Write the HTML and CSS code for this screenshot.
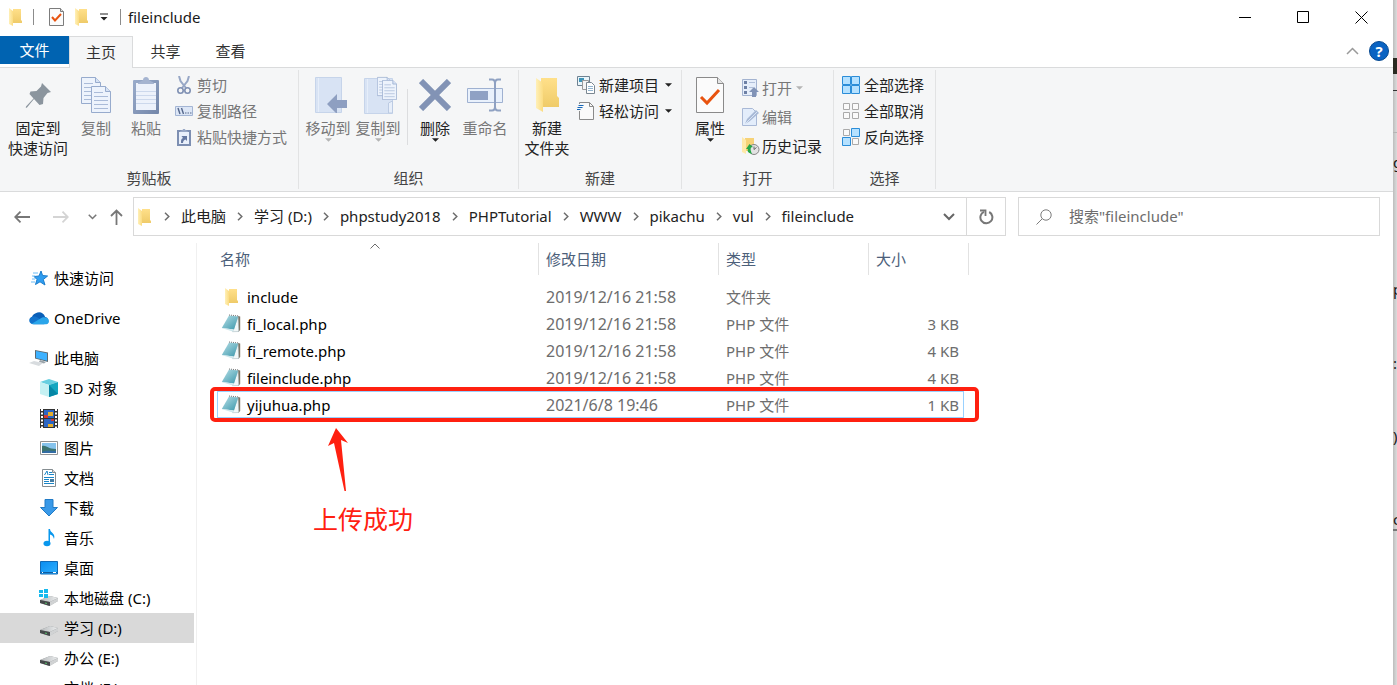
FILE: index.html
```html
<!DOCTYPE html>
<html lang="zh-CN">
<head>
<meta charset="utf-8">
<title>fileinclude</title>
<link rel="stylesheet" href="styles.css">
</head>
<body>
<svg class="defs" aria-hidden="true">
  <defs>
    <linearGradient id="gFold" x1="0" x2="1"><stop offset="0" stop-color="#fff0b8"/><stop offset="1" stop-color="#fbdc82"/></linearGradient>
    <linearGradient id="gFoldB" x1="0" x2="0" y1="0" y2="1"><stop offset="0" stop-color="#ffe08a"/><stop offset="1" stop-color="#efcb69"/></linearGradient>
    <linearGradient id="gNote" x1="0" y1="0" x2="1" y2="1"><stop offset="0" stop-color="#b9e0e8"/><stop offset="1" stop-color="#3a97ab"/></linearGradient>
    <linearGradient id="gClip" x1="0" y1="0" x2="1" y2="1"><stop offset="0" stop-color="#9aaccb"/><stop offset="1" stop-color="#7386a9"/></linearGradient>
    <linearGradient id="gDrive" x1="0" x2="1"><stop offset="0" stop-color="#b5b8ba"/><stop offset="1" stop-color="#eceeef"/></linearGradient>
    <linearGradient id="gDesk" x1="0" y1="0" x2="1" y2="1"><stop offset="0" stop-color="#0a8df0"/><stop offset="1" stop-color="#2fb0ff"/></linearGradient>
    <symbol id="folder" viewBox="0 0 13 18"><path d="M4 1h8v11l1 1v2H4z" fill="url(#gFoldB)"/><path d="M0 0l4 3v15l-4-2z" fill="url(#gFold)"/></symbol>
    <symbol id="folderBig" viewBox="0 0 25 36"><path d="M6 1h16v18l2 2v9H6z" fill="url(#gFoldB)"/><path d="M1 1l7 5v29l-7-4z" fill="url(#gFold)"/></symbol>
    <symbol id="props" viewBox="0 0 28 36"><path d="M.5.5h21l6 6v29H.5z" fill="#fbfbfb" stroke="#8a8a8a"/><path d="M21.500.5v6h6" fill="#e4e4e4" stroke="#8a8a8a"/><path d="M5 20l6 6L23 13" fill="none" stroke="#e8530f" stroke-width="3"/></symbol>
    <symbol id="propsSmall" viewBox="0 0 15 18"><path d="M.5.5h11l3 3v14H.5z" fill="#fbfbfb" stroke="#7c7c7c"/><path d="M11.500.5v3h3" fill="#ddd" stroke="#7c7c7c"/><path d="M3 9l3 3.500L12 6" fill="none" stroke="#e8530f" stroke-width="2"/></symbol>
    <symbol id="page" viewBox="0 0 20 27"><path d="M.5.500h14l5 5v21H.5z" fill="#edf3fc" stroke="#97abcd"/><path d="M14.500.5v5h5" fill="#d6e2f4" stroke="#97abcd"/><path d="M3 6.500h9M3 10.500h14M3 14.500h14M3 18.500h14M3 22.500h14" stroke="#aabbd8"/></symbol>
    <symbol id="note" viewBox="0 0 20 19"><path d="M17 2l2.200.5v13.500L17 18z" fill="#7d7566"/><path d="M17 2.500l.8 15-6.300.2z" fill="#f2f8f9" stroke="#a9bcc1" stroke-width=".6"/><path d="M8 1.500L17.200 2.500 13 15.500 .8 14z" fill="url(#gNote)"/><path d="M.8 14l12.200 1.500-1.500 2z" fill="#cfe8ed"/><path d="M8 1l10 1" stroke="#777" stroke-dasharray="1 1"/></symbol>
    <symbol id="drive" viewBox="0 0 20 14"><path d="M1 7l10-4 8 2v3l-9 5-9-3z" fill="#8b8f91"/><path d="M1 7l10-4 8 2-8 4z" fill="url(#gDrive)"/><path d="M1 7l10 2v4L1 10z" fill="#454849"/><path d="M11 9l8-4v3l-8 5z" fill="#d1d3d4"/><path d="M6 10l2 .5" stroke="#55c06a"/></symbol>
    <symbol id="chev" viewBox="0 0 6 9"><path d="M1 .8l3.800 3.700L1 8.200" fill="none" stroke="#6d6d6d" stroke-width="1.500"/></symbol>
    <symbol id="down" viewBox="0 0 12 8"><path d="M1 1l5 5 5-5" fill="none" stroke="currentColor" stroke-width="2"/></symbol>
    <symbol id="tri" viewBox="0 0 6 3"><path d="M0 0h6L3 3z" fill="currentColor"/></symbol>
  </defs>
</svg>

<div class="window">
  <header class="titlebar">
    <svg class="t-folder" width="13" height="18"><use href="#folder"/></svg>
    <span class="t-sep"></span>
    <svg class="t-props" width="15" height="18"><use href="#propsSmall"/></svg>
    <svg class="t-folder2" width="13" height="18"><use href="#folder"/></svg>
    <svg class="t-more" width="8" height="8" viewBox="0 0 8 8"><path d="M0 1h8" stroke="#222"/><path d="M.5 4h7L4 7.500z" fill="#222"/></svg>
    <span class="t-sep t-sep2"></span>
    <h1 class="t-title">fileinclude</h1>
    <div class="win-btns">
      <button aria-label="最小化"><svg width="13" height="13" viewBox="0 0 13 13"><path d="M0 6.500h12" stroke="#000"/></svg></button>
      <button aria-label="最大化"><svg width="13" height="13" viewBox="0 0 13 13"><path d="M.5.500h11v11H.5z" fill="none" stroke="#000"/></svg></button>
      <button aria-label="关闭"><svg width="13" height="13" viewBox="0 0 13 13"><path d="M.5.500l12 12M12.500.500l-12 12" stroke="#000"/></svg></button>
    </div>
  </header>

  <nav class="tabs">
    <button class="tab file">文件</button>
    <button class="tab active">主页</button>
    <button class="tab">共享</button>
    <button class="tab">查看</button>
    <div class="tabs-end">
      <button aria-label="折叠功能区"><svg width="13" height="8" viewBox="0 0 13 8"><path d="M1 7l5.500-5.500L12 7" fill="none" stroke="#9a9a9a" stroke-width="1.500"/></svg></button>
      <button class="help" aria-label="帮助">?</button>
    </div>
  </nav>

  <section class="ribbon">
    <div class="group">
      <div class="tools g-clip">
        <button class="big pin"><span class="ico"><svg width="27" height="27" viewBox="0 0 27 27"><path d="M17 1l9 9-3.500 1-4 5-.500 6-3.500 1L9 17l-7 8.500L.8 26 1 24.500 8.500 16.500 4.500 12l1-2.500 6-.5L16 4.500z" fill="#8b959e"/></svg></span><span>固定到<br>快速访问</span></button>
        <button class="big" disabled><span class="ico"><svg width="30" height="37" viewBox="0 0 30 37"><use href="#page" width="20" height="27"/><use href="#page" x="10" y="9" width="20" height="27"/></svg></span><span>复制</span></button>
        <button class="big" disabled><span class="ico"><svg width="26" height="37" viewBox="0 0 26 37"><rect y="3" width="26" height="34" rx="1" fill="url(#gClip)"/><rect x="3" y="6" width="20" height="27" fill="#edf2fb"/><path d="M3 14.500h20M3 18.500h20M3 22.500h20M3 26.500h20" stroke="#ccd8ec"/><path d="M5 7c0-3 4-2 5-4 0-4 6-4 6 0 1 2 5 1 5 4z" fill="#a5b4d0"/></svg></span><span>粘贴</span></button>
        <div class="stack">
          <button disabled><svg width="18" height="18" viewBox="0 0 18 18"><path d="M4 0l1.500 5 5.500 7M14 0l-1.500 5L7 12" fill="none" stroke="#97a7c6" stroke-width="2"/><circle cx="5.500" cy="14.500" r="2.700" fill="none" stroke="#7f90b3" stroke-width="1.600"/><circle cx="12.500" cy="14.500" r="2.700" fill="none" stroke="#7f90b3" stroke-width="1.600"/></svg>剪切</button>
          <button disabled><svg width="18" height="18" viewBox="0 0 18 18"><path d="M.5 4.500h17v9H.5z" fill="#dce6f6" stroke="#a3b5d4"/><path d="M3 6l2 6M6.500 6l2 6" stroke="#56688c" stroke-width="1.400"/><path d="M10 11h1.500M12.500 11H14M15 11h1.500" stroke="#56688c"/></svg>复制路径</button>
          <button disabled><svg width="18" height="18" viewBox="0 0 18 18"><path d="M2 2h14v16H2z" fill="#7d8fb2"/><path d="M4 4h10v12H4z" fill="#e9f0fb"/><path d="M5 4c0-2 3-1 3-3h2c0 2 3 1 3 3z" fill="#98a8c6"/><path d="M6 15c0-3 0-4 2-5L6.500 8H12v5l-1.500-1.500C9 12 8 13 8 15z" fill="#6579a2"/></svg>粘贴快捷方式</button>
        </div>
      </div>
      <div class="caption">剪贴板</div>
    </div>
    <div class="group">
      <div class="tools g-org">
        <button class="big" disabled><span class="ico"><svg width="38" height="36" viewBox="-6 0 38 36"><path d="M.5.500h26v35H.5z" fill="#d8e3f4" stroke="#c6d4ea"/><path d="M3.500 1v34" stroke="#e6eefa"/><path d="M12 27L22 17v6h10v8H22v6z" fill="#8e9fc1"/></svg></span><span>移动到</span><svg class="arr" width="7" height="4"><use href="#tri"/></svg></button>
        <button class="big" disabled><span class="ico"><svg width="40" height="38" viewBox="-6 0 40 38"><path d="M.5 2.500h28v35H.5z" fill="#d8e3f4" stroke="#c6d4ea"/><path d="M3.500 3v34" stroke="#e6eefa"/><use href="#page" x="13" width="14" height="21"/><use href="#page" x="18" y="4" width="15" height="20"/><path d="M24.500 37V27l4-2v12z" fill="#e8effa" stroke="#bccbe3"/></svg></span><span>复制到</span><svg class="arr" width="7" height="4"><use href="#tri"/></svg></button>
        <span class="tool-sep"></span>
        <button class="big"><span class="ico"><svg width="32" height="32" viewBox="0 0 32 32"><path d="M2 2l28 28M30 2L2 30" stroke="#8293b5" stroke-width="6"/></svg></span><span>删除</span><svg class="arr" width="7" height="4"><use href="#tri"/></svg></button>
        <button class="big" disabled><span class="ico"><svg width="37" height="34" viewBox="0 0 37 34"><path d="M.5 10.500h35v14H.5z" fill="#e9f1fc" stroke="#9fb1d1"/><path d="M3 13h18v9H3z" fill="#8fa1c4"/><path d="M22 1.500h3c3 0 3 3 3 4v23c0 1 0 4-3 4h-3M34 1.500h-3c-3 0-3 3-3 4M34 32.500h-3c-3 0-3-3-3-4" fill="none" stroke="#8fa1c2" stroke-width="2"/></svg></span><span>重命名</span></button>
      </div>
      <div class="caption">组织</div>
    </div>
    <div class="group">
      <div class="tools g-new">
        <button class="big"><span class="ico"><svg width="25" height="36"><use href="#folderBig"/></svg></span><span>新建<br>文件夹</span></button>
        <div class="stack">
          <button><svg width="18" height="18" viewBox="0 0 18 18"><path d="M.5.500h12v9H.5z" fill="#e9f5fb" stroke="#6e8292"/><path d="M2 2h5v4H2z" fill="#3f94b8"/><path d="M5.500 4.500h6v9h-6z" fill="#f4f4f4" stroke="#9a9a9a"/><path d="M9.500 6.500h5l3 3v8h-8z" fill="#fff" stroke="#7a8791"/><path d="M11 10.500h5M11 12.500h5M11 14.500h5" stroke="#92b4cf"/></svg>新建项目<svg class="arr" width="7" height="4"><use href="#tri"/></svg></button>
          <button><svg width="18" height="18" viewBox="0 0 18 18"><path d="M2.500.500h10l4 4v13h-14z" fill="#fafafa" stroke="#8a8a8a"/><path d="M12.500.500v4h4" fill="none" stroke="#8a8a8a"/><path d="M0 2h5v7H0z" fill="#f5f6f7"/><path d="M1.500 3.500h5M.5 5.500h5M0 7.500h3.500" stroke="#1667b8"/></svg>轻松访问<svg class="arr" width="7" height="4"><use href="#tri"/></svg></button>
        </div>
      </div>
      <div class="caption">新建</div>
    </div>
    <div class="group">
      <div class="tools g-open">
        <button class="big"><span class="ico"><svg width="28" height="36"><use href="#props"/></svg></span><span>属性</span><svg class="arr" width="7" height="4"><use href="#tri"/></svg></button>
        <div class="stack tall">
          <button disabled><svg width="18" height="18" viewBox="0 0 18 18"><path d="M.5.500h14v16H.5z" fill="#e6eefa" stroke="#a3b3d0"/><path d="M2 2h3v3H2zM2 7h3v3H2zM2 12h3v3H2z" fill="#6d80a5"/><path d="M7 3.500h6M7 8.500h4" stroke="#b1c0da"/><path d="M7 13l5-5 5 5h-3v5h-4v-5z" fill="#8193b6"/></svg>打开<svg class="arr" width="7" height="4"><use href="#tri"/></svg></button>
          <button disabled><svg width="18" height="18" viewBox="0 0 18 18"><path d="M.5.500h10l4 4v13H.5z" fill="#e3edfb" stroke="#a9b9d6"/><path d="M3 16l2-5 9-9 3 3-9 8z" fill="#a8b9d6"/><path d="M3 16l12-12" stroke="#d9e4f4"/></svg>编辑</button>
          <button><svg width="18" height="18" viewBox="0 0 18 18"><path d="M3 1h9v13H3z" fill="#f6d277"/><path d="M0 0l4 3v14l-4-2z" fill="#ffe9a8"/><circle cx="12" cy="12.500" r="5" fill="#e3e3e3" stroke="#858585"/><path d="M12 9.500v3l2.500-2" stroke="#666" fill="none"/><path d="M4 12l3.500-5 3.500 3-2 .5c-1 2 0 4 1 6.500-4-1-5-3-4-5z" fill="#26a746"/></svg>历史记录</button>
        </div>
      </div>
      <div class="caption">打开</div>
    </div>
    <div class="group">
      <div class="tools g-sel">
        <div class="stack">
          <button><svg width="18" height="18" viewBox="0 0 18 18"><path d="M.5.500h8v8h-8zM9.500.500h8v8h-8zM.5 9.500h8v8h-8zM9.500 9.500h8v8h-8z" fill="#b5e1ff" stroke="#2b8dd8"/></svg>全部选择</button>
          <button><svg width="18" height="18" viewBox="0 0 18 18"><path d="M1.500 1.500h6v6h-6zM10.500 1.500h6v6h-6zM1.500 10.500h6v6h-6zM10.500 10.500h6v6h-6z" fill="#fafafa" stroke="#aaa"/></svg>全部取消</button>
          <button><svg width="18" height="18" viewBox="0 0 18 18"><path d="M1.500 1.500h6v6h-6zM10.500 10.500h6v6h-6z" fill="#fafafa" stroke="#aaa"/><path d="M9.500.500h8v8h-8zM.5 9.500h8v8h-8z" fill="#b5e1ff" stroke="#2b8dd8"/></svg>反向选择</button>
        </div>
      </div>
      <div class="caption">选择</div>
    </div>
  </section>

  <div class="location">
    <div class="nav-btns">
      <button aria-label="后退"><svg width="16" height="12" viewBox="0 0 16 12"><path d="M1 6h15M6.500.700L1.200 6l5.300 5.300" fill="none" stroke="#777" stroke-width="1.800"/></svg></button>
      <button aria-label="前进"><svg width="16" height="12" viewBox="0 0 16 12"><path d="M0 6h15M9.500.700L14.800 6l-5.300 5.300" fill="none" stroke="#d4d4d4" stroke-width="1.800"/></svg></button>
      <button class="narrow" aria-label="最近浏览的位置"><svg width="9" height="6" viewBox="0 0 12 8" color="#777"><use href="#down"/></svg></button>
      <button class="narrow" aria-label="上移"><svg width="13" height="16" viewBox="0 0 13 16"><path d="M6.500 16V1.500M1 7l5.500-5.500L12 7" fill="none" stroke="#777" stroke-width="1.800"/></svg></button>
    </div>
    <div class="address">
      <svg class="a-folder" width="13" height="18"><use href="#folder"/></svg>
      <svg width="6" height="9"><use href="#chev"/></svg><a href="#">此电脑</a>
      <svg width="6" height="9"><use href="#chev"/></svg><a href="#">学习 (D:)</a>
      <svg width="6" height="9"><use href="#chev"/></svg><a href="#">phpstudy2018</a>
      <svg width="6" height="9"><use href="#chev"/></svg><a href="#">PHPTutorial</a>
      <svg width="6" height="9"><use href="#chev"/></svg><a href="#">WWW</a>
      <svg width="6" height="9"><use href="#chev"/></svg><a href="#">pikachu</a>
      <svg width="6" height="9"><use href="#chev"/></svg><a href="#">vul</a>
      <svg width="6" height="9"><use href="#chev"/></svg><a href="#">fileinclude</a>
      <button class="a-drop" aria-label="以前的位置"><svg width="12" height="8" color="#666"><use href="#down"/></svg></button>
      <button class="a-refresh" aria-label="刷新"><svg width="15" height="16" viewBox="0 0 15 16"><path d="M10.200 3A6 6 0 1 1 5 2.800" fill="none" stroke="#777" stroke-width="2"/><path d="M1 1.500h5.500V7" fill="none" stroke="#777" stroke-width="1.800"/></svg></button>
    </div>
    <label class="search">
      <svg width="16" height="16" viewBox="0 0 16 16"><circle cx="10" cy="6" r="5.200" fill="none" stroke="#7c7c7c"/><path d="M6.300 9.700L.5 15.500" stroke="#7c7c7c"/></svg>
      <input type="text" aria-label="搜索" placeholder="搜索&quot;fileinclude&quot;">
    </label>
  </div>

  <div class="body">
    <nav class="side">
      <a class="top" href="#"><span class="si"><svg width="20" height="18" viewBox="0 0 20 18"><path d="M12 2l1.600 4.500 5 .5-4.300 3.500L16 16 11 12.800 6.500 15.500 8 10.500 5 7.500l5-.5z" fill="#2f9df0" stroke="#1b7dcc"/><path d="M4 4h5M3 7h3M3 10h3M2 13h4" stroke="#6cbcf5"/></svg></span>快速访问</a>
      <a class="top" href="#"><span class="si"><svg width="20" height="14" viewBox="0 0 21 14"><path d="M3 9a6 6 0 0 1 4-7c4-2 8-1 10 4a4 4 0 0 1 2 7z" fill="#0a5fb8"/><path d="M4 13.500c-5-1-5-7 0-8 2-.5 4 0 5 1l9 6c-1 1-2 1-3 1z" fill="#1273cc"/><path d="M3 13l9-5.500c2-1.500 4-1.500 5-1 5 0 5 7 1 7H5z" fill="#2aa5ea"/></svg></span>OneDrive</a>
      <a class="top" href="#"><span class="si"><svg width="20" height="18" viewBox="0 0 20 18"><path d="M6 1l13 2.500V13L6 9.500z" fill="#5d6970"/><path d="M7 2l11 2.300v7.400L7 9z" fill="#3cb1ff"/><path d="M11 11l6 2-2 1.500-5-1.500z" fill="#9aa3a9"/><path d="M0 14l5-2 9 2-4 3z" fill="#d8dcdf"/></svg></span>此电脑</a>
      <a href="#"><span class="si"><svg width="18" height="18" viewBox="0 0 18 18"><path d="M9 0l9 3-9 3-9-3z" fill="#67cfe0"/><path d="M0 3l9 3v12l-9-3z" fill="#c5f1f3"/><path d="M18 3L9 6v12l9-3z" fill="#13a6c0"/><path d="M9 6l9 9-9 3z" fill="#0686a5"/></svg></span>3D 对象</a>
      <a href="#"><span class="si"><svg width="18" height="19" viewBox="0 0 18 19"><path d="M0 0h18v19H0z" fill="#333"/><path d="M2 0v19M16 0v19" stroke="#fff" stroke-width="2" stroke-dasharray="2 1.500"/><path d="M4 1h10v8H4zM4 10h10v8H4z" fill="#2c66c4"/><path d="M8 3h5v4H8zM8 15h5v3H8z" fill="#e5ae2b"/><path d="M4 6h4v3H4zM11 10h3v2h-3z" fill="#d23a32"/></svg></span>视频</a>
      <a href="#"><span class="si"><svg width="18" height="14" viewBox="0 0 18 14"><path d="M.5.500h17v13H.5z" fill="#fff" stroke="#949494"/><path d="M2 2h14v10H2z" fill="#86c3ec"/><path d="M2 5c5-1 5 3 14 3v4H2z" fill="#3c7470"/><path d="M2 11c4-2 8-1 14-1v2H2z" fill="#326ca4"/></svg></span>图片</a>
      <a href="#"><span class="si"><svg width="16" height="18" viewBox="0 0 16 18"><path d="M1.500.500h10l3 3v14h-13z" fill="#fff" stroke="#858d91"/><path d="M11.500.500v3h3" fill="#ddd" stroke="#858d91"/><path d="M3.500 6L6 2l1 4M8 3.500h3M8 5.500h5M3 8.500h10M3 10.500h5M3 12.500h5M3 14.500h10" fill="none" stroke="#1a86c8"/><path d="M9 10h4v3H9z" fill="#447ba1"/></svg></span>文档</a>
      <a href="#"><span class="si"><svg width="18" height="18" viewBox="0 0 18 18"><path d="M5 .5h8v8h4.500L9 17 .5 8.500H5z" fill="#3999e8" stroke="#217bc6"/></svg></span>下载</a>
      <a href="#"><span class="si"><svg width="18" height="18" viewBox="0 0 18 18"><ellipse cx="7" cy="14.500" rx="3.500" ry="2.800" fill="#0997ed"/><path d="M8.500 15V0h1.500c0 4 6 4 4 10-1-3-2-4-4-4.500V15z" fill="#0997ed"/></svg></span>音乐</a>
      <a href="#"><span class="si"><svg width="18" height="14" viewBox="0 0 18 14"><path d="M.5.500h17v12.500H.5z" fill="url(#gDesk)" stroke="#126ab5"/><path d="M1 11.500h16" stroke="#0e5ca0"/><path d="M2 11.500h1M13 11.500h3" stroke="#fff"/></svg></span>桌面</a>
      <a href="#"><span class="si"><svg width="20" height="18" viewBox="0 0 20 18"><use href="#drive" y="4" width="20" height="14"/><path d="M0 1h4v3H0zM5 0h4v4H5zM0 5h4v3H0zM5 5h4v4H5z" fill="#16b9ee"/></svg></span>本地磁盘 (C:)</a>
      <a class="current" href="#"><span class="si"><svg width="20" height="18" viewBox="0 0 20 18"><use href="#drive" y="4" width="20" height="14"/></svg></span>学习 (D:)</a>
      <a href="#"><span class="si"><svg width="20" height="18" viewBox="0 0 20 18"><use href="#drive" y="4" width="20" height="14"/></svg></span>办公 (E:)</a>
      <a href="#"><span class="si"><svg width="20" height="18" viewBox="0 0 20 18"><use href="#drive" y="4" width="20" height="14"/></svg></span>文档 (F:)</a>
    </nav>
    <main class="files">
      <table>
        <colgroup><col class="c-name"><col class="c-date"><col class="c-type"><col class="c-size"></colgroup>
        <thead>
          <tr><th><svg class="sort" width="10" height="6" viewBox="0 0 10 6"><path d="M.5 5.500L5 1l4.500 4.500" fill="none" stroke="#6b6b6b"/></svg>名称</th><th>修改日期</th><th>类型</th><th>大小</th></tr>
        </thead>
        <tbody>
          <tr><td><div class="name"><span class="si"><svg width="13" height="18"><use href="#folder"/></svg></span>include</div></td><td class="date">2019/12/16 21:58</td><td>文件夹</td><td></td></tr>
          <tr><td><div class="name"><span class="si"><svg width="20" height="19"><use href="#note"/></svg></span>fi_local.php</div></td><td class="date">2019/12/16 21:58</td><td>PHP 文件</td><td>3 KB</td></tr>
          <tr><td><div class="name"><span class="si"><svg width="20" height="19"><use href="#note"/></svg></span>fi_remote.php</div></td><td class="date">2019/12/16 21:58</td><td>PHP 文件</td><td>4 KB</td></tr>
          <tr><td><div class="name"><span class="si"><svg width="20" height="19"><use href="#note"/></svg></span>fileinclude.php</div></td><td class="date">2019/12/16 21:58</td><td>PHP 文件</td><td>4 KB</td></tr>
          <tr class="focus"><td><div class="name"><span class="si"><svg width="20" height="19"><use href="#note"/></svg></span>yijuhua.php</div></td><td class="date">2021/6/8 19:46</td><td>PHP 文件</td><td>1 KB</td></tr>
        </tbody>
      </table>
      <div class="mark-box"></div>
      <svg class="mark-arrow" width="20" height="64" viewBox="0 0 20 64"><path d="M8 0l12 15-7-3 5 51h-1.500L6 15l-6 3z" fill="#ff2010"/></svg>
      <p class="mark-text">上传成功</p>
    </main>
  </div>
</div>

<aside class="behind" aria-hidden="true">
  <i class="dark"></i><i class="line l1"></i><i class="line l2"></i><i class="line l3"></i>
  <span class="f1">g</span><span class="f2">p</span><span class="f3">:</span><span class="f4">)</span><span class="f5">c</span>
</aside>
</body>
</html>
```

FILE: styles.css
```css
* { box-sizing: border-box; }

body {
  margin: 0;
  height: 100vh;
  display: flex;
  overflow: hidden;
  background: #fff;
  color: #1a1a1a;
  font: 15px/20px "Noto Sans", "Noto Sans CJK SC", sans-serif;
}

button, input { font: inherit; color: inherit; border: 0; background: none; padding: 0; margin: 0; }
a { color: inherit; text-decoration: none; }
svg { display: block; flex: none; }
.defs { position: absolute; width: 0; height: 0; }

.window { flex: 1; min-width: 0; display: flex; flex-direction: column; background: #fff; }

/* Title bar */
.titlebar { display: flex; align-items: center; height: 36px; padding: 0 0 2px 9px; flex: none; }
.t-sep { width: 1px; height: 16px; background: #8c8c8c; margin: 0 15px 0 11px; }
.t-folder2 { margin-left: 11px; }
.t-more { margin-left: 12px; }
.t-sep2 { margin: 0 7px 0 12px; }
.t-title { margin: 0; font-size: 15px; font-weight: 400; line-height: 20px; }
.win-btns { display: flex; margin-left: auto; padding-right: 3px; }
.win-btns button { width: 58px; height: 34px; display: grid; place-items: center; }

/* Tabs */
.tabs { display: flex; height: 32px; flex: none; box-shadow: inset 0 -1px #dadbdc; }
.tab { width: 65px; padding-bottom: 2px; color: #333; }
.tab.file { width: 69px; height: 28px; padding-bottom: 0; background: #0063b1; color: #fff; }
.tab.active { width: 64px; background: #f5f6f7; border: 1px solid #dadbdc; border-bottom: 0; }
.tabs-end { display: flex; align-items: center; gap: 10px; margin-left: auto; padding: 0 4px 2px 0; }
.help { width: 20px; height: 20px; border-radius: 50%; background: #0a63c2; border: 1px solid #084a91; color: #fff; font-weight: 700; line-height: 18px; }

/* Ribbon */
.ribbon { display: flex; flex: none; padding: 2px 0; background: #f5f6f7; border-bottom: 1px solid #dadbdc; }
.group { display: flex; flex-direction: column; border-right: 1px solid #e2e3e4; }
.tools { display: flex; height: 98px; }
.caption { height: 21px; text-align: center; color: #444; }
.big { width: 50px; display: flex; flex-direction: column; align-items: center; white-space: nowrap; }
.big.pin { width: 66px; }
.ico { height: 48px; padding-top: 2px; display: grid; place-items: center; }
.big, .stack button { color: #222; }
.big:disabled, .stack button:disabled { color: #777; }
.arr { color: #222; }
:disabled .arr { color: #b4b4b4; }
.stack { display: flex; flex-direction: column; padding: 2px 0; }
.stack button { display: flex; align-items: center; gap: 4px; height: 26px; white-space: nowrap; }
.stack.tall { padding-top: 3px; }
.stack.tall button { height: 29px; gap: 2px; }
.stack .arr { margin-left: 2px; }
.g-clip { padding: 0 11px 0 5px; }
.g-clip .stack { padding-left: 4px; }
.g-org { padding: 0 8px 0 4px; }
.tool-sep { width: 1px; height: 56px; margin: 19px 2px 0 4px; background: #dcdddf; }
.g-new { padding: 0 9px 0 3px; }
.g-new .stack { padding-left: 5px; }
.g-open { padding: 0 11px 0 3px; }
.g-open .stack { padding-left: 7px; }
.g-sel { padding: 0 11px 0 8px; }

/* Location bar */
.location { display: flex; flex: none; padding: 5px 13px 7px 3px; }
.nav-btns { display: flex; align-items: center; width: 130px; padding-right: 4px; }
.nav-btns button { flex: 39; display: grid; place-items: center; height: 38px; }
.nav-btns .narrow { flex: 25; }
.address { flex: 1; min-width: 0; display: flex; align-items: center; gap: 11px; height: 39px; border: 1px solid #d9d9d9; color: #222; white-space: nowrap; }
.address a { padding-bottom: 2px; }
.a-folder { margin: 0 2px 0 4px; }
.a-drop { margin-left: auto; width: 12px; }
.a-refresh { width: 39px; height: 37px; display: grid; place-items: center; border-left: 1px solid #d9d9d9; }
.search { display: flex; align-items: center; gap: 17px; width: 362px; height: 39px; margin-left: 12px; padding: 0 17px; border: 1px solid #d9d9d9; }
.search input { flex: 1; min-width: 0; padding-bottom: 2px; outline: 0; }
.search input::placeholder { color: #6d6d6d; opacity: 1; }

/* Body */
.body { flex: 1; min-height: 0; display: flex; overflow: hidden; }
.side { width: 197px; flex: none; padding: 20px 2px 0 0; border-right: 1px solid #f0f0f0; color: #000; }
.side a { display: flex; align-items: center; gap: 5px; height: 30px; padding-left: 39px; white-space: nowrap; }
.side .top { padding-left: 29px; margin-bottom: 10px; }
.side .top:nth-child(3) { margin-bottom: 0; }
.side .current { background: #d9d9d9; }
.si { width: 20px; flex: none; display: grid; place-items: center; }

.files { position: relative; flex: 1; min-width: 0; padding-left: 15px; }
table { table-layout: fixed; width: 757px; border-collapse: separate; border-spacing: 0; color: #6d6d6d; }
.c-name { width: 327px; }
.c-date { width: 180px; }
.c-type { width: 150px; }
.c-size { width: 100px; }
th { position: relative; height: 32px; padding: 0 7px; font-weight: 400; text-align: left; color: #4c607a; border-right: 1px solid #e2e2e2; }
th:first-child { padding-left: 8px; }
.sort { position: absolute; top: 0; left: calc(50% - 5px); }
td { height: 27px; padding: 0 7px; white-space: nowrap; }
tbody::before { content: ""; display: block; height: 8px; }
td:first-child { padding-left: 9px; color: #000; }
td:last-child { padding-right: 10px; text-align: right; }
.date { font-size: 16px; }
.name { display: flex; align-items: center; gap: 6px; }
.focus { position: relative; }
.focus td:first-child::before { content: ""; position: absolute; inset: 0 5px; border: 1px solid #99d1ff; }

/* Annotation over the list */
.mark-box { position: absolute; left: 13px; top: 144px; width: 769px; height: 35px; border: 4px solid #ff2010; border-radius: 5px; }
.mark-arrow { position: absolute; left: 131px; top: 185px; }
.mark-text { position: absolute; left: 116px; top: 260px; margin: 0; font-size: 25px; line-height: 32px; color: #ff2010; }

/* Page showing past the window's right edge */
.behind { position: relative; width: 4px; flex: none; overflow: hidden; background: linear-gradient(90deg, #bdbdbd, #dcdcdc); }
.behind i, .behind span { position: absolute; left: 0; }
.behind i { width: 4px; height: 1px; background: #b5b5b5; }
.behind .dark { top: 58px; height: 16px; background: #2a2b22; }
.behind .l1 { top: 90px; background: #333; }
.behind .l2 { top: 132px; }
.behind .l3 { top: 529px; height: 2px; background: #777; }
.f1 { top: 152px; }
.f2 { top: 279px; }
.f3 { top: 353px; }
.f4 { top: 426px; }
.f5 { top: 509px; }
```
